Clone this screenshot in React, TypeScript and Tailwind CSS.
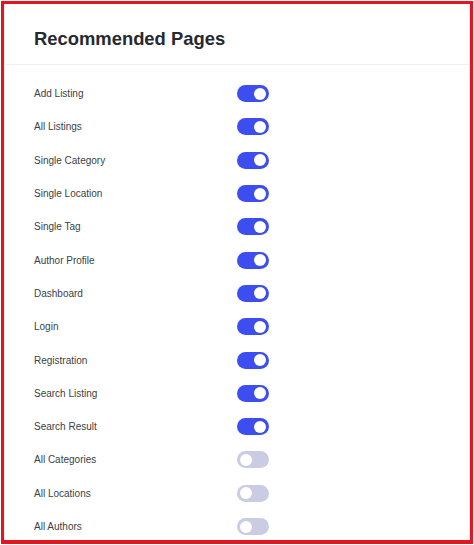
const pages = [
  { label: "Add Listing", on: true },
  { label: "All Listings", on: true },
  { label: "Single Category", on: true },
  { label: "Single Location", on: true },
  { label: "Single Tag", on: true },
  { label: "Author Profile", on: true },
  { label: "Dashboard", on: true },
  { label: "Login", on: true },
  { label: "Registration", on: true },
  { label: "Search Listing", on: true },
  { label: "Search Result", on: true },
  { label: "All Categories", on: false },
  { label: "All Locations", on: false },
  { label: "All Authors", on: false },
];

const Toggle = ({ on }: { on: boolean }) => (
  <div
    className={
      on
        ? "flex h-[17px] w-[32px] items-center justify-end rounded-full bg-[#3d4ef0] px-[3px]"
        : "flex h-[17px] w-[32px] items-center justify-start rounded-full bg-[#c9cce2] px-[3px]"
    }
  >
    <div className="h-[12px] w-[12px] rounded-full bg-white" />
  </div>
);

export default function App() {
  return (
    <div className="h-[545px] w-[474px] overflow-hidden bg-white p-[1px] font-['Liberation_Sans',Arial,sans-serif]">
      <div className="h-full border-[3px] border-b-[4px] border-r-[3px] border-[#e3161f] bg-white">
        <div className="h-full border-x border-[#eceef2]">
          {/* Header */}
          <div className="flex h-[61px] items-center border-b border-[#f0f0f1] pl-[29px] pt-[10px]">
            <h2 className="text-[18.4px] font-bold text-[#262a2e]">Recommended Pages</h2>
          </div>

          {/* Page list */}
          <div className="pl-[29px] pt-[12px]">
            {pages.map((p) => (
              <div key={p.label} className="flex h-[33.3px] items-center">
                <span className="w-[203px] text-[10px] text-[#3a3f45]">{p.label}</span>
                <Toggle on={p.on} />
              </div>
            ))}
          </div>
        </div>
      </div>
    </div>
  );
}
